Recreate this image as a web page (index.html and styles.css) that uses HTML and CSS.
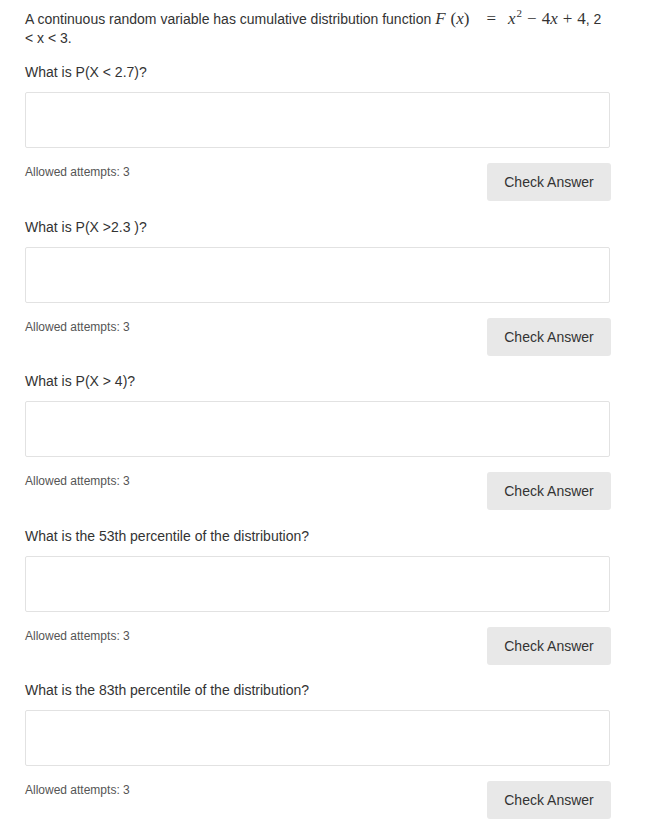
FILE: index.html
```html
<!DOCTYPE html>
<html lang="en">
<head>
<meta charset="utf-8">
<title>Quiz</title>
<link rel="stylesheet" href="styles.css">
</head>
<body>
<main class="page">
  <p class="intro">A continuous random variable has cumulative distribution function <span class="math"><i>F</i><span class="sp1"></span>(<i>x</i>)<span class="rel">=</span><i>x</i><sup>2</sup><span class="bin">−</span>4<i>x</i><span class="bin">+</span>4</span>,&nbsp;2 &lt; x &lt; 3.</p>

  <section class="q">
    <p class="q-text">What is P(X &lt; 2.7)?</p>
    <div class="answer"></div>
    <div class="q-foot"><span class="attempts">Allowed attempts: 3</span><button class="check">Check Answer</button></div>
  </section>

  <section class="q">
    <p class="q-text">What is P(X &gt;2.3 )?</p>
    <div class="answer"></div>
    <div class="q-foot"><span class="attempts">Allowed attempts: 3</span><button class="check">Check Answer</button></div>
  </section>

  <section class="q">
    <p class="q-text">What is P(X &gt; 4)?</p>
    <div class="answer"></div>
    <div class="q-foot"><span class="attempts">Allowed attempts: 3</span><button class="check">Check Answer</button></div>
  </section>

  <section class="q">
    <p class="q-text">What is the 53th percentile of the distribution?</p>
    <div class="answer"></div>
    <div class="q-foot"><span class="attempts">Allowed attempts: 3</span><button class="check">Check Answer</button></div>
  </section>

  <section class="q">
    <p class="q-text">What is the 83th percentile of the distribution?</p>
    <div class="answer"></div>
    <div class="q-foot"><span class="attempts">Allowed attempts: 3</span><button class="check">Check Answer</button></div>
  </section>
</main>
</body>
</html>
```
FILE: styles.css
```css
html, body {
  margin: 0;
  padding: 0;
  background: #ffffff;
}

body {
  font-family: "Liberation Sans", Arial, sans-serif;
  color: #333333;
}

.page {
  width: 586px;
  padding: 10px 0 0 25px;
}

.intro {
  margin: 0 0 15px 0;
  font-size: 14px;
  line-height: 19px;
}

.math {
  font-family: "Liberation Serif", "Times New Roman", serif;
  font-size: 17px;
  line-height: 0;
}

.math i {
  font-style: italic;
}

.math sup {
  font-size: 11px;
  line-height: 0;
  vertical-align: 7px;
  margin-left: 1px;
}

.sp1 {
  display: inline-block;
  width: 5px;
}

.rel {
  margin: 0 12px 0 17px;
}

.bin {
  margin: 0 5px;
}

.q + .q {
  margin-top: 16.5px;
}

.q-text {
  margin: 0 0 10px 0;
  font-size: 14px;
  line-height: 19px;
}

.answer {
  width: 583px;
  height: 54px;
  border: 1px solid #e2e2e2;
  border-radius: 2px;
  background: #ffffff;
}

.q-foot {
  margin-top: 15px;
  display: flex;
  justify-content: space-between;
  align-items: flex-start;
}

.attempts {
  font-size: 12px;
  line-height: 18px;
  color: #555555;
}

.check {
  width: 124px;
  height: 38px;
  border: none;
  border-radius: 3px;
  background: #e8e8e8;
  color: #333333;
  font-family: "Liberation Sans", Arial, sans-serif;
  font-size: 14px;
  padding: 0;
}
```
